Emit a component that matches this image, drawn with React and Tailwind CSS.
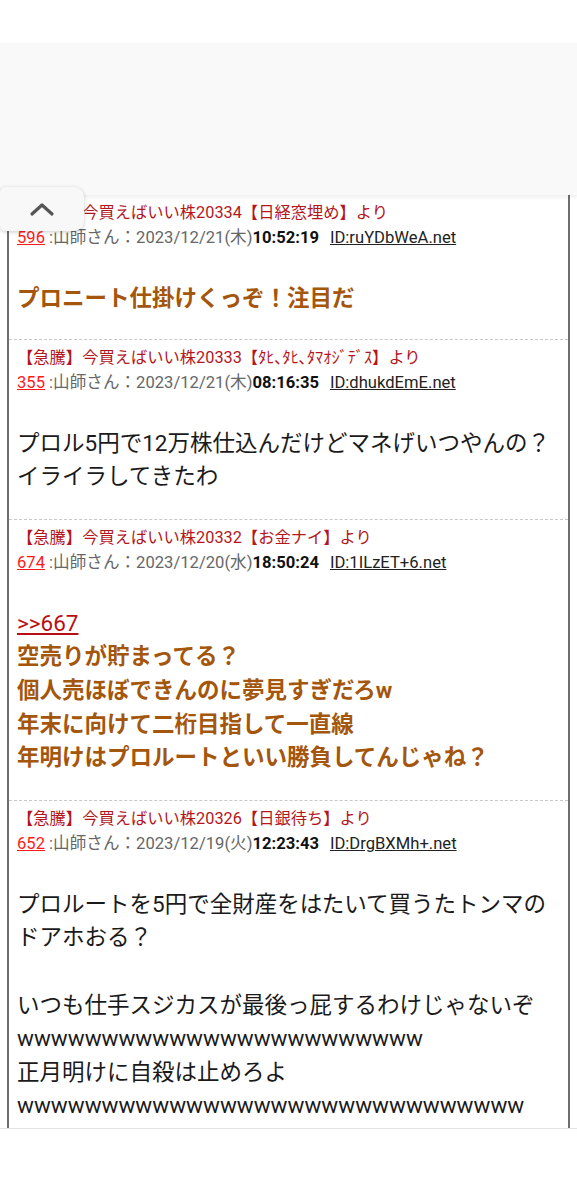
import React from "react";

const posts = [
  {
    thread: "【急騰】今買えばいい株20334【日経窓埋め】より",
    no: "596",
    date: "2023/12/21(木)",
    time: "10:52:19",
    id: "ID:ruYDbWeA.net",
    hot: true,
    lines: ["プロニート仕掛けくっぞ！注目だ"],
  },
  {
    thread: "【急騰】今買えばいい株20333【ﾀﾋ､ﾀﾋ､ﾀﾏｵｼﾞﾃﾞｽ】より",
    no: "355",
    date: "2023/12/21(木)",
    time: "08:16:35",
    id: "ID:dhukdEmE.net",
    lines: ["プロル5円で12万株仕込んだけどマネげいつやんの？", "イライラしてきたわ"],
  },
  {
    thread: "【急騰】今買えばいい株20332【お金ナイ】より",
    no: "674",
    date: "2023/12/20(水)",
    time: "18:50:24",
    id: "ID:1ILzET+6.net",
    hot: true,
    anchor: ">>667",
    lines: [
      "空売りが貯まってる？",
      "個人売ほぼできんのに夢見すぎだろw",
      "年末に向けて二桁目指して一直線",
      "年明けはプロルートといい勝負してんじゃね？",
    ],
  },
  {
    thread: "【急騰】今買えばいい株20326【日銀待ち】より",
    no: "652",
    date: "2023/12/19(火)",
    time: "12:23:43",
    id: "ID:DrgBXMh+.net",
    lines: [
      "プロルートを5円で全財産をはたいて買うたトンマの",
      "ドアホおる？",
      "",
      "いつも仕手スジカスが最後っ屁するわけじゃないぞ",
      "wwwwwwwwwwwwwwwwwwwwwwww",
      "正月明けに自殺は止めろよ",
      "wwwwwwwwwwwwwwwwwwwwwwwwwwwwww",
    ],
  },
];

function Post({ p, first }) {
  return (
    <div
      className={`border-b border-dashed border-[#c8c8c8] px-[8px] pt-[5px] ${
        first ? "pb-[23px]" : "pb-[25px]"
      }`}
    >
      <div className="text-[16.3px] leading-[25px] text-[#b3161c] whitespace-nowrap">{p.thread}</div>
      <div className="text-[16.6px] leading-[25px] whitespace-nowrap">
        <span className="text-[#ff1a1a] underline">{p.no}</span>
        <span className="text-[#666]"> :山師さん：{p.date}</span>
        <span className="font-bold text-[#111]">{p.time}</span>
        <span className="ml-[11px] text-[#222] underline">{p.id}</span>
      </div>
      <div
        className={`mt-[32px] text-[22.5px] leading-[33.6px] whitespace-nowrap ${
          p.hot ? "font-bold text-[#a3560c]" : "text-[#1a1a1a]"
        }`}
      >
        {p.anchor && <div className="font-normal text-[#b80f14] underline">{p.anchor}</div>}
        {p.lines.map((l, i) => (
          <div key={i}>{l || "\u00a0"}</div>
        ))}
      </div>
    </div>
  );
}

export default function App() {
  return (
    <div
      className="relative w-[577px] h-[1200px] bg-white overflow-hidden"
      style={{ fontFamily: 'Roboto, "Noto Sans CJK JP", sans-serif' }}
    >
      <div className="h-[43px] bg-white" />
      <div className="relative z-10 h-[152px] bg-[#f9f9f9] shadow-[0_2px_4px_rgba(0,0,0,0.08)]" />

      {/* back to top */}
      <button className="absolute left-0 top-[187px] z-20 flex h-[44px] w-[84px] items-center justify-center rounded-r-[10px] rounded-l-[6px] bg-[#f8f8f8] shadow-[0_1px_4px_rgba(0,0,0,0.2)]">
        <svg width="26" height="16" viewBox="0 0 26 16" fill="none">
          <polyline points="3,13 13,4 23,13" stroke="#555" strokeWidth="3.2" strokeLinecap="round" strokeLinejoin="round" />
        </svg>
      </button>

      <div className="mx-[7px] h-[933px] overflow-hidden border-x-2 border-[#6e6e6e]">
        {posts.map((p, i) => (
          <Post key={p.no} p={p} first={i === 0} />
        ))}
      </div>
      <div className="h-[72px] border-t border-[#e3e3e3] bg-white" />
    </div>
  );
}
